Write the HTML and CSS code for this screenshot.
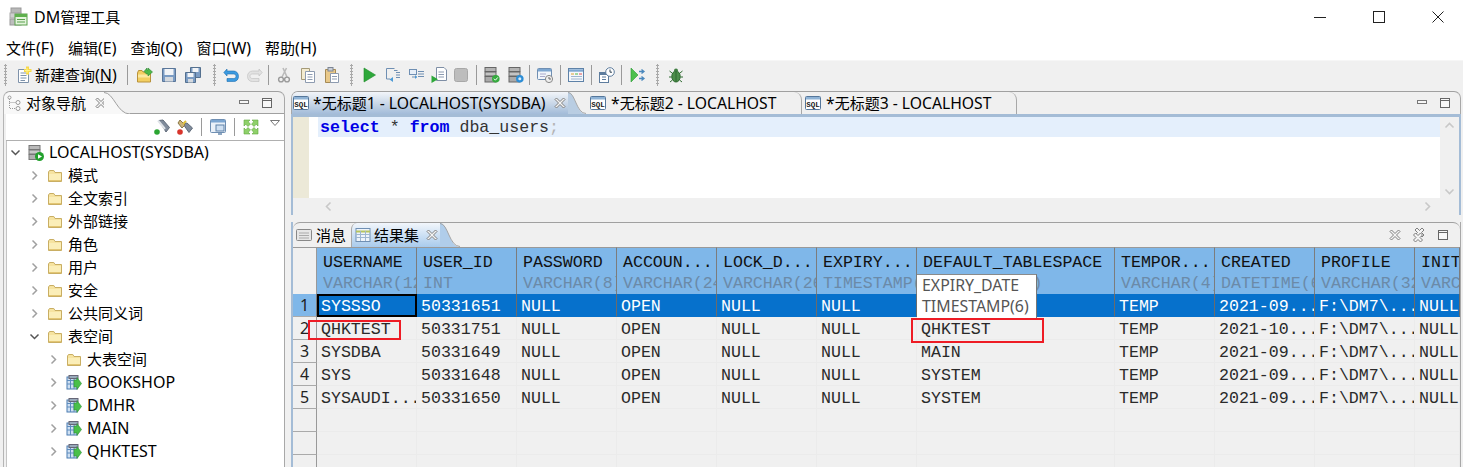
FILE: index.html
```html
<!DOCTYPE html>
<html lang="zh">
<head>
<meta charset="utf-8">
<title>DM管理工具</title>
<link rel="stylesheet" href="styles.css">
</head>
<body>
<svg class="defs" xmlns="http://www.w3.org/2000/svg">
  <symbol id="folder" viewBox="0 0 16 16"><path d="M1.5 4V13.5H14.5V4.5H8L6.8 2.5H2.5Z" fill="#f6e3a0" stroke="#c9ae63"/><path d="M2 6H14V13H2Z" fill="#fbeeb8"/><path d="M2 12.5H14" stroke="#e3c673"/></symbol>
  <symbol id="server" viewBox="0 0 16 16"><rect x="1" y="0.5" width="11" height="4" fill="#b9b9b9" stroke="#777"/><rect x="1" y="5" width="11" height="4" fill="#c8c8c8" stroke="#777"/><rect x="1" y="9.5" width="11" height="5" fill="#b0b0b0" stroke="#777"/><circle cx="11.5" cy="11.5" r="4.5" fill="#22a02c"/><path d="M10 9.2L14 11.5L10 13.8Z" fill="#fff"/></symbol>
  <symbol id="tablespace" viewBox="0 0 16 16"><rect x="1" y="2" width="10" height="12" fill="#cfe0f2" stroke="#4b7cb2"/><path d="M1 5.5H11M1 9H11M4.5 2V14M8 2V14" stroke="#5e8dbf"/><rect x="3" y="0.5" width="9" height="3" fill="#9ab" stroke="#667"/><path d="M8 5H11V2.5L15.5 8.5L11 14.5V12H8Z" fill="#49c04a" stroke="#2f8f37" stroke-width=".6"/></symbol>
  <symbol id="sql" viewBox="0 0 16 16"><rect x="0.5" y="1.5" width="15" height="13" rx="1" fill="#fff" stroke="#55779b"/><rect x="1" y="2" width="14" height="2.5" fill="#8fb3d6"/><text x="8" y="12.2" text-anchor="middle" class="sqltxt">SQL</text></symbol>
  <symbol id="close" viewBox="0 0 12 12"><path d="M2.5 1L6 4.5L9.5 1L11 2.5L7.5 6L11 9.5L9.5 11L6 7.5L2.5 11L1 9.5L4.5 6L1 2.5Z" fill="#f4f4f4" stroke="#7e7e7e"/></symbol>
  <symbol id="closeall" viewBox="0 0 16 16"><path d="M6 1L8.5 3.5L11 1L13 3L10.5 5.5L13 8L11 10L8.5 7.5L6 10L4 8L6.5 5.5L4 3Z" fill="#f4f4f4" stroke="#7e7e7e"/><path d="M4.5 6L7 8.5L9.5 6L11.5 8L9 10.5L11.5 13L9.5 15L7 12.5L4.5 15L2.5 13L5 10.5L2.5 8Z" fill="#f4f4f4" stroke="#7e7e7e"/></symbol>
  <symbol id="minv" viewBox="0 0 12 12"><rect x="1.5" y="3.5" width="9" height="3" fill="#f6f6f6" stroke="#777"/></symbol>
  <symbol id="maxv" viewBox="0 0 12 12"><rect x="1.5" y="1.5" width="9" height="9" fill="#f8f8f8" stroke="#666"/><path d="M1.5 3.5H10.5" stroke="#666"/></symbol>
  <symbol id="grid" viewBox="0 0 16 16"><rect x="1" y="1.5" width="14" height="13" fill="#eef4fb" stroke="#6f8fb3"/><path d="M1 4.5H15" stroke="#b6c45f" stroke-width="2"/><path d="M1 7.5H15M1 10.5H15M5.5 4V14M10.5 4V14" stroke="#9eb6d0"/></symbol>
  <symbol id="msg" viewBox="0 0 16 16"><rect x="0.5" y="2.5" width="15" height="11" rx="1" fill="#e6e6e6" stroke="#888"/><path d="M3 6H13M3 8.5H13M3 11H13" stroke="#aaa"/></symbol>
  <symbol id="newdoc" viewBox="0 0 18 18"><path d="M2.5 3.5H12.5V16.5H2.5Z" fill="#fff" stroke="#7e92aa"/><path d="M4.5 7H10.5M4.5 9.5H10.5M4.5 12H10.5M4.5 14.5H9" stroke="#7e92aa"/><path d="M13 0.5V3H15.5V6H13V8.5H10V6H8V3H10V0.5Z" fill="#f7d84a"/><path d="M11 2V7M9 4.5H14.5" stroke="#fff48e"/></symbol>
  <symbol id="open" viewBox="0 0 16 16"><path d="M0.5 6V15H13.5V5H6L5 3.5H1.5Z" fill="#f3cf62" stroke="#b9923b"/><path d="M1 9H13" stroke="#fbe9a2" stroke-width="3"/><path d="M7 4.5L10 1V3H11V1L15.5 5L11 9V7H9.5Z" fill="#4cb748" stroke="#2c8a34" stroke-width=".6"/></symbol>
  <symbol id="save" viewBox="0 0 16 16"><path d="M1.5 1.5H14.5V14.5H1.5Z" fill="#7b9cc4" stroke="#5a7699"/><rect x="3.5" y="2" width="9" height="6" fill="#f2f4f7"/><rect x="4" y="10" width="8" height="4.5" fill="#d5d9de"/></symbol>
  <symbol id="saveall" viewBox="0 0 16 16"><path d="M5.5 .5H15.5V10.5H5.5Z" fill="#7b9cc4" stroke="#54708f"/><rect x="7.5" y="1" width="6" height="4" fill="#f2f4f7"/><path d="M.5 5.5H10.5V15.5H.5Z" fill="#7b9cc4" stroke="#54708f"/><rect x="2.5" y="6" width="6" height="4" fill="#f2f4f7"/><rect x="3" y="12" width="5" height="3.5" fill="#d5d9de"/></symbol>
  <symbol id="undo" viewBox="0 0 16 16"><path d="M4 2L0.8 5.5L4 9V7H10.5C12.2 7 13 8 13 9.3C13 10.7 12 11.5 10.5 11.5H4V14.5H10.8C13.6 14.5 15.5 12.3 15.5 9.4C15.5 6.3 13.5 4 10.6 4H4Z" fill="#3b9ae0" stroke="#1f6fb0" stroke-width=".6"/></symbol>
  <symbol id="redo" viewBox="0 0 16 16"><path d="M12 2L15.2 5.5L12 9V7H5.5C3.8 7 3 8 3 9.3C3 10.7 4 11.5 5.5 11.5H12V14.5H5.2C2.4 14.5 .5 12.3 .5 9.4C.5 6.3 2.5 4 5.4 4H12Z" fill="#e2e2e2" stroke="#bdbdbd" stroke-width=".6"/></symbol>
  <symbol id="cut" viewBox="0 0 16 16"><path d="M10.5 1L6 10M7 1L11 10" stroke="#bbb" stroke-width="1.6" fill="none"/><circle cx="5" cy="12.5" r="2.4" fill="none" stroke="#9a9a9a" stroke-width="1.4"/><circle cx="11" cy="12.5" r="2.4" fill="none" stroke="#9a9a9a" stroke-width="1.4"/></symbol>
  <symbol id="copy" viewBox="0 0 16 16"><path d="M1.5 1.5H9.5V12.5H1.5Z" fill="#f4ecd0" stroke="#a59a78"/><path d="M5.5 4.5H14.5V15.5H5.5Z" fill="#fff" stroke="#8d9bb0"/><path d="M7.5 7.5H12.5M7.5 10H12.5M7.5 12.5H12.5" stroke="#8d9bb0"/></symbol>
  <symbol id="paste" viewBox="0 0 16 16"><path d="M1.5 2.5H11.5V15.5H1.5Z" fill="#e9c98a" stroke="#a58a55"/><rect x="4" y=".5" width="5" height="3.5" fill="#c9ced6" stroke="#7c8594"/><path d="M6.5 6.5H14.5V15.5H6.5Z" fill="#fff" stroke="#8d9bb0"/><path d="M8 9.5H13M8 12H13" stroke="#8d9bb0"/></symbol>
  <symbol id="play" viewBox="0 0 16 16"><path d="M3 1L14.5 8L3 15Z" fill="#2ea83a" stroke="#1e8a2a" stroke-width=".6"/></symbol>
  <symbol id="runa" viewBox="0 0 16 16"><path d="M1.5 1.5H9.5M1.5 1.5V12H5M12.5 3.5H9M11 5.5H15M11 8H15M11 10.5H15" stroke="#6f8fb3" fill="none"/><path d="M8 10V15L4.5 12.5Z" fill="#4c9ad6"/></symbol>
  <symbol id="runb" viewBox="0 0 16 16"><rect x=".5" y="2.5" width="7" height="5" fill="#e7eff8" stroke="#6f8fb3"/><path d="M9 4.5H15M9 7H15M9 9.5H15M3 10H8" stroke="#6f8fb3"/><path d="M6 8L8 10L6 12Z" fill="#4c9ad6"/></symbol>
  <symbol id="rund" viewBox="0 0 16 16"><path d="M5.5 .5H13L15.5 3V13.5H5.5Z" fill="#fff" stroke="#7e8ea5"/><path d="M7.5 5H13M7.5 7.5H13M7.5 10H13" stroke="#8d9bb0"/><path d="M.5 8.5L7 12.2L.5 16Z" fill="#2ea83a"/></symbol>
  <symbol id="stop" viewBox="0 0 16 16"><rect x="1.5" y="1.5" width="13" height="13" rx="2" fill="#bdbdbd" stroke="#a8a8a8"/></symbol>
  <symbol id="dbok" viewBox="0 0 16 16"><rect x="1" y=".5" width="11" height="4" fill="#b3b3b3" stroke="#666"/><rect x="1" y="5" width="11" height="4" fill="#c4c4c4" stroke="#666"/><rect x="1" y="9.5" width="11" height="5.5" fill="#aaa" stroke="#666"/><circle cx="11.8" cy="11.8" r="3.8" fill="#35ab3e"/><path d="M10 11.7L11.4 13.2L13.8 10.4" stroke="#fff" fill="none"/></symbol>
  <symbol id="dbblue" viewBox="0 0 16 16"><rect x="1" y=".5" width="11" height="4" fill="#b3b3b3" stroke="#666"/><rect x="1" y="5" width="11" height="4" fill="#c4c4c4" stroke="#666"/><rect x="1" y="9.5" width="11" height="5.5" fill="#aaa" stroke="#666"/><circle cx="11.8" cy="11.8" r="3.8" fill="#2d8ed6"/><circle cx="11.8" cy="11.8" r="1.5" fill="#d8ecfa"/></symbol>
  <symbol id="winclock" viewBox="0 0 16 16"><rect x=".5" y="1.5" width="14" height="11" rx="1" fill="#f0f5fb" stroke="#6f8fb3"/><rect x="1" y="2" width="13" height="2.5" fill="#7ca6d1"/><path d="M3 7H9M3 9.5H8" stroke="#aac"/><circle cx="12" cy="12" r="3.6" fill="#eee" stroke="#888"/><path d="M12 10V12H14" stroke="#666" fill="none"/></symbol>
  <symbol id="tablebig" viewBox="0 0 16 16"><rect x=".5" y="1.5" width="15" height="13" fill="#f4f7fb" stroke="#5e82a8"/><path d="M1 3.5H15" stroke="#7ca6d1" stroke-width="2.4"/><path d="M3 7H6" stroke="#e0a030"/><path d="M7 7H10" stroke="#4cb748"/><path d="M11 7H14" stroke="#e05050"/><path d="M3 9.5H14M3 12H14" stroke="#9eb6d0"/></symbol>
  <symbol id="calclock" viewBox="0 0 16 16"><rect x=".5" y="5.5" width="9" height="10" fill="#fff" stroke="#5e7d9e"/><rect x="1" y="6" width="8" height="2" fill="#5e7d9e"/><path d="M3 10H7M3 12.5H7" stroke="#5e7d9e"/><circle cx="11" cy="5" r="4.3" fill="#fff" stroke="#5e7d9e"/><path d="M11 2.5V5.2H13" stroke="#345" fill="none"/></symbol>
  <symbol id="runstep" viewBox="0 0 16 16"><path d="M1 1L8 8L1 15Z" fill="#4bc04e" stroke="#2a9b34" stroke-width=".6"/><path d="M9 4.5H13M11.5 2.5L14 4.5L11.5 6.5M9 11.5H13M11.5 9.5L14 11.5L11.5 13.5" stroke="#4b88bd" fill="none" stroke-width="1.3"/></symbol>
  <symbol id="bug" viewBox="0 0 16 16"><ellipse cx="8" cy="9.5" rx="4.2" ry="5.5" fill="#4c8d4a" stroke="#2f6b30"/><circle cx="8" cy="3.4" r="2" fill="#3f7d40"/><path d="M8 4V15M4 6L1.5 4M12 6L14.5 4M3.8 10H1M12.2 10H15M4.5 13L2 15M11.5 13L14 15" stroke="#2f6b30"/></symbol>
  <symbol id="plugg" viewBox="0 0 16 16"><path d="M5 1.5L9 1L15.5 8.5L12 13Z" fill="#7f8b9b" stroke="#5f6a79"/><path d="M4 1.5L11 10" stroke="#dfe3e8" stroke-width="2"/><circle cx="3" cy="13" r="2.8" fill="#2ba532"/></symbol>
  <symbol id="plugr" viewBox="0 0 16 16"><path d="M6 5L10 4L15.5 9L12 13.5Z" fill="#7f8b9b" stroke="#5f6a79"/><path d="M3 1L8 6L5 9L1 4Z" fill="#cbb37a" stroke="#8a7748"/><path d="M6 5L9 2" stroke="#e0c23c" stroke-width="2"/><circle cx="3" cy="13" r="2.8" fill="#d8352c"/></symbol>
  <symbol id="wincomp" viewBox="0 0 16 16"><rect x=".5" y=".5" width="15" height="13" rx="1" fill="#eaf1f9" stroke="#6f8fb3"/><rect x="1" y="1" width="14" height="2.5" fill="#7ca6d1"/><rect x="6" y="6" width="8" height="6" fill="#cfe0f2" stroke="#5e82a8"/><path d="M8 15H12" stroke="#5e82a8" stroke-width="1.4"/></symbol>
  <symbol id="expand" viewBox="0 0 16 16"><path d="M1 1H7L5.2 2.8L7.5 5L5 7.5L2.8 5.2L1 7ZM15 1V7L13.2 5.2L11 7.5L8.5 5L10.8 2.8L9 1ZM1 15V9L2.8 10.8L5 8.5L7.5 11L5.2 13.2L7 15ZM15 15H9L10.8 13.2L8.5 11L11 8.5L13.2 10.8L15 9Z" fill="#8fd16a" stroke="#5fa83e" stroke-width=".6"/></symbol>
  <symbol id="tree" viewBox="0 0 16 16"><path d="M2.5 2V13.5H9M2.5 7.5H9" stroke="#999" stroke-dasharray="1 1" fill="none"/><circle cx="2.5" cy="2.5" r="1.5" fill="#fff" stroke="#999"/><circle cx="11" cy="7.5" r="2" fill="#fff" stroke="#999"/><circle cx="11" cy="13.5" r="2" fill="#fff" stroke="#999"/></symbol>
  <symbol id="appicon" viewBox="0 0 20 20"><rect x="3" y="1" width="10" height="5" fill="#b8b8b8" stroke="#999"/><rect x="2" y="6" width="11" height="5" fill="#cfcfcf" stroke="#aaa"/><rect x="2" y="12" width="11" height="6" fill="#bdbdbd" stroke="#999"/><rect x="7" y="7" width="12" height="11" fill="#e3f4dc" stroke="#5aa04c"/><rect x="7" y="7" width="12" height="3" fill="#5fb04d"/><path d="M9 12.5H17M9 15H17" stroke="#5aa04c"/></symbol>
  <symbol id="chevr" viewBox="0 0 11 11"><path d="M3.5 1.5L7.5 5.5L3.5 9.5" fill="none" stroke="#a0a0a0" stroke-width="1.5"/></symbol>
  <symbol id="chevd" viewBox="0 0 11 11"><path d="M1.5 3.5L5.5 7.5L9.5 3.5" fill="none" stroke="#555" stroke-width="1.5"/></symbol>
</svg>

<header class="titlebar">
  <svg class="app-icon"><use href="#appicon"/></svg>
  <span class="app-title"><em class="lat">DM</em>管理工具</span>
  <div class="winctl">
    <svg class="wc" viewBox="0 0 12 12"><path d="M0 6.5H12" stroke="#222"/></svg>
    <svg class="wc" viewBox="0 0 12 12"><rect x=".5" y=".5" width="11" height="11" fill="none" stroke="#222"/></svg>
    <svg class="wc" viewBox="0 0 12 12"><path d="M.5 .5L11.5 11.5M11.5 .5L.5 11.5" stroke="#222"/></svg>
  </div>
</header>

<nav class="menubar">
  <span>文件<em class="lat">(F)</em></span><span>编辑<em class="lat">(E)</em></span><span>查询<em class="lat">(Q)</em></span><span>窗口<em class="lat">(W)</em></span><span>帮助<em class="lat">(H)</em></span>
</nav>

<div class="toolbar">
  <i class="grip"></i>
  <div class="newq"><svg class="ic18"><use href="#newdoc"/></svg><span>新建查询<em class="lat">(<u>N</u>)</em></span></div>
  <i class="sep sep-a"></i>
  <b class="tb"><svg><use href="#open"/></svg></b>
  <b class="tb"><svg><use href="#save"/></svg></b>
  <b class="tb"><svg><use href="#saveall"/></svg></b>
  <i class="grip grip-m"></i>
  <b class="tb"><svg><use href="#undo"/></svg></b>
  <b class="tb"><svg><use href="#redo"/></svg></b>
  <i class="sep sep-r"></i>
  <b class="tb"><svg><use href="#cut"/></svg></b>
  <b class="tb"><svg><use href="#copy"/></svg></b>
  <b class="tb"><svg><use href="#paste"/></svg></b>
  <i class="grip grip-n"></i>
  <b class="tb"><svg><use href="#play"/></svg></b>
  <b class="tb"><svg><use href="#runa"/></svg></b>
  <b class="tb"><svg><use href="#runb"/></svg></b>
  <b class="tb tb-n"><svg><use href="#rund"/></svg></b>
  <b class="tb"><svg><use href="#stop"/></svg></b>
  <i class="sep"></i>
  <b class="tb"><svg><use href="#dbok"/></svg></b>
  <b class="tb"><svg><use href="#dbblue"/></svg></b>
  <i class="sep sep-r"></i>
  <b class="tb"><svg><use href="#winclock"/></svg></b>
  <i class="sep"></i>
  <b class="tb"><svg><use href="#tablebig"/></svg></b>
  <i class="sep"></i>
  <b class="tb"><svg><use href="#calclock"/></svg></b>
  <i class="sep sep-s"></i>
  <b class="tb"><svg><use href="#runstep"/></svg></b>
  <i class="grip grip-b"></i>
  <b class="tb"><svg><use href="#bug"/></svg></b>
</div>

<main class="workspace">
  <section class="nav-panel">
    <div class="tabrow">
      <div class="tab nav-tab">
        <svg class="ic16"><use href="#tree"/></svg>
        <span>对象导航</span>
        <svg class="x12"><use href="#close"/></svg>
      </div>
      <svg class="curve" viewBox="0 0 26 23" preserveAspectRatio="none"><path d="M0 0C10 0 13 22 26 22V23H0Z" fill="#f8f8f8"/><path d="M0 .5C10 .5 13 22 26 22" fill="none" stroke="#a0a0a0"/></svg>
      <div class="tabfill">
        <svg class="x12"><use href="#minv"/></svg>
        <svg class="x12"><use href="#maxv"/></svg>
      </div>
    </div>
    <div class="nav-tools">
      <svg class="ic16"><use href="#plugg"/></svg>
      <svg class="ic16"><use href="#plugr"/></svg>
      <i class="sep"></i>
      <svg class="ic16"><use href="#wincomp"/></svg>
      <i class="sep"></i>
      <svg class="ic16"><use href="#expand"/></svg>
      <svg class="tri" viewBox="0 0 10 6"><path d="M.5 .5H9.5L5 5.5Z" fill="#fff" stroke="#777"/></svg>
    </div>
    <ul class="tree">
      <li class="lv0"><svg class="chev"><use href="#chevd"/></svg><svg class="ic16"><use href="#server"/></svg><span class="lat">LOCALHOST(SYSDBA)</span></li>
      <li class="lv1"><svg class="chev"><use href="#chevr"/></svg><svg class="ic16"><use href="#folder"/></svg><span>模式</span></li>
      <li class="lv1"><svg class="chev"><use href="#chevr"/></svg><svg class="ic16"><use href="#folder"/></svg><span>全文索引</span></li>
      <li class="lv1"><svg class="chev"><use href="#chevr"/></svg><svg class="ic16"><use href="#folder"/></svg><span>外部链接</span></li>
      <li class="lv1"><svg class="chev"><use href="#chevr"/></svg><svg class="ic16"><use href="#folder"/></svg><span>角色</span></li>
      <li class="lv1"><svg class="chev"><use href="#chevr"/></svg><svg class="ic16"><use href="#folder"/></svg><span>用户</span></li>
      <li class="lv1"><svg class="chev"><use href="#chevr"/></svg><svg class="ic16"><use href="#folder"/></svg><span>安全</span></li>
      <li class="lv1"><svg class="chev"><use href="#chevr"/></svg><svg class="ic16"><use href="#folder"/></svg><span>公共同义词</span></li>
      <li class="lv1"><svg class="chev"><use href="#chevd"/></svg><svg class="ic16"><use href="#folder"/></svg><span>表空间</span></li>
      <li class="lv2"><svg class="chev"><use href="#chevr"/></svg><svg class="ic16"><use href="#folder"/></svg><span>大表空间</span></li>
      <li class="lv2"><svg class="chev"><use href="#chevr"/></svg><svg class="ic16"><use href="#tablespace"/></svg><span class="lat">BOOKSHOP</span></li>
      <li class="lv2"><svg class="chev"><use href="#chevr"/></svg><svg class="ic16"><use href="#tablespace"/></svg><span class="lat">DMHR</span></li>
      <li class="lv2"><svg class="chev"><use href="#chevr"/></svg><svg class="ic16"><use href="#tablespace"/></svg><span class="lat">MAIN</span></li>
      <li class="lv2"><svg class="chev"><use href="#chevr"/></svg><svg class="ic16"><use href="#tablespace"/></svg><span class="lat">QHKTEST</span></li>
    </ul>
  </section>

  <section class="right-panel">
    <div class="edit-tabs">
      <div class="tab etab-active">
        <svg class="ic16"><use href="#sql"/></svg>
        <span><em class="lat">*</em>无标题<em class="lat">1 - LOCALHOST(SYSDBA)</em></span>
        <svg class="x12"><use href="#close"/></svg>
      </div>
      <svg class="curve curve-blue" viewBox="0 0 22 23" preserveAspectRatio="none"><path d="M0 0C9 0 10 23 22 23H0Z" fill="#b9cde2"/><path d="M0 .5C9 .5 10 22.5 22 22.5" fill="none" stroke="#a0a0a0"/></svg>
      <div class="tab etab etab2">
        <svg class="ic16"><use href="#sql"/></svg>
        <span><em class="lat">*</em>无标题<em class="lat">2 - LOCALHOST</em></span>
      </div>
      <div class="tab etab etab3">
        <svg class="ic16"><use href="#sql"/></svg>
        <span><em class="lat">*</em>无标题<em class="lat">3 - LOCALHOST</em></span>
      </div>
      <div class="tabfill tabfill-edit">
        <svg class="x12"><use href="#minv"/></svg>
        <svg class="x12"><use href="#maxv"/></svg>
      </div>
    </div>
    <div class="editor">
      <div class="gutter"></div>
      <div class="code-area">
        <div class="code-line"><b class="kw">select</b> * <b class="kw">from</b> dba_users<span class="semi">;</span></div>
      </div>
      <div class="vscroll"><svg class="arrow" viewBox="0 0 11 11"><path d="M1.5 7.5L5.5 3.5L9.5 7.5" fill="none" stroke="#c8c8c8" stroke-width="1.6"/></svg><svg class="arrow" viewBox="0 0 11 11"><path d="M1.5 3.5L5.5 7.5L9.5 3.5" fill="none" stroke="#c8c8c8" stroke-width="1.6"/></svg></div>
    </div>
    <div class="hscroll"><svg class="arrow" viewBox="0 0 11 11"><path d="M7.5 1.5L3.5 5.5L7.5 9.5" fill="none" stroke="#c8c8c8" stroke-width="1.6"/></svg><svg class="arrow" viewBox="0 0 11 11"><path d="M3.5 1.5L7.5 5.5L3.5 9.5" fill="none" stroke="#c8c8c8" stroke-width="1.6"/></svg></div>

    <div class="result">
      <div class="res-tabs">
        <div class="tab rtab"><svg class="ic16"><use href="#msg"/></svg><span>消息</span></div>
        <div class="tab rtab-active"><svg class="ic16"><use href="#grid"/></svg><span>结果集</span><svg class="x12"><use href="#close"/></svg></div>
        <svg class="curve curve-res" viewBox="0 0 22 25" preserveAspectRatio="none"><path d="M0 0C9 0 10 25 22 25H0Z" fill="#b0cdea"/><path d="M0 .5C9 .5 10 24.5 22 24.5" fill="none" stroke="#a0a0a0"/></svg>
        <div class="tabfill tabfill-res">
          <svg class="x12"><use href="#close"/></svg>
          <svg class="ic16"><use href="#closeall"/></svg>
          <svg class="x12"><use href="#maxv"/></svg>
        </div>
      </div>
      <div class="grid-wrap">
        <table class="grid">
          <colgroup><col class="c-n"><col class="c"><col class="c"><col class="c"><col class="c"><col class="c"><col class="c"><col class="c-w"><col class="c"><col class="c"><col class="c"><col class="c-e"></colgroup>
          <thead>
            <tr>
              <th class="corner"></th>
              <th><div class="hn">USERNAME</div><div class="ht">VARCHAR(128)</div></th>
              <th><div class="hn">USER_ID</div><div class="ht">INT</div></th>
              <th><div class="hn">PASSWORD</div><div class="ht">VARCHAR(8)</div></th>
              <th><div class="hn">ACCOUN...</div><div class="ht">VARCHAR(24)</div></th>
              <th><div class="hn">LOCK_D...</div><div class="ht">VARCHAR(26)</div></th>
              <th><div class="hn">EXPIRY...</div><div class="ht">TIMESTAMP(6)</div></th>
              <th><div class="hn">DEFAULT_TABLESPACE</div><div class="ht">VARCHAR(128)</div></th>
              <th><div class="hn">TEMPOR...</div><div class="ht">VARCHAR(4)</div></th>
              <th><div class="hn">CREATED</div><div class="ht">DATETIME(6)</div></th>
              <th><div class="hn">PROFILE</div><div class="ht">VARCHAR(32)</div></th>
              <th><div class="hn">INITIAL</div><div class="ht">VARCHAR(32)</div></th>
            </tr>
          </thead>
          <tbody>
            <tr class="sel"><th>1</th><td class="cur">SYSSSO</td><td>50331651</td><td>NULL</td><td>OPEN</td><td>NULL</td><td>NULL</td><td></td><td>TEMP</td><td>2021-09...</td><td>F:\DM7\...</td><td>NULL</td></tr>
            <tr><th>2</th><td>QHKTEST</td><td>50331751</td><td>NULL</td><td>OPEN</td><td>NULL</td><td>NULL</td><td>QHKTEST</td><td>TEMP</td><td>2021-10...</td><td>F:\DM7\...</td><td>NULL</td></tr>
            <tr><th>3</th><td>SYSDBA</td><td>50331649</td><td>NULL</td><td>OPEN</td><td>NULL</td><td>NULL</td><td>MAIN</td><td>TEMP</td><td>2021-09...</td><td>F:\DM7\...</td><td>NULL</td></tr>
            <tr><th>4</th><td>SYS</td><td>50331648</td><td>NULL</td><td>OPEN</td><td>NULL</td><td>NULL</td><td>SYSTEM</td><td>TEMP</td><td>2021-09...</td><td>F:\DM7\...</td><td>NULL</td></tr>
            <tr><th>5</th><td>SYSAUDI...</td><td>50331650</td><td>NULL</td><td>OPEN</td><td>NULL</td><td>NULL</td><td>SYSTEM</td><td>TEMP</td><td>2021-09...</td><td>F:\DM7\...</td><td>NULL</td></tr>
            <tr><th></th><td></td><td></td><td></td><td></td><td></td><td></td><td></td><td></td><td></td><td></td><td></td></tr>
            <tr><th></th><td></td><td></td><td></td><td></td><td></td><td></td><td></td><td></td><td></td><td></td><td></td></tr>
            <tr><th></th><td></td><td></td><td></td><td></td><td></td><td></td><td></td><td></td><td></td><td></td><td></td></tr>
          </tbody>
        </table>
        <div class="tooltip">EXPIRY_DATE<br>TIMESTAMP(6)</div>
        <div class="mark mark-a"></div>
        <div class="mark mark-b"></div>
      </div>
    </div>
  </section>
</main>
</body>
</html>
```

FILE: styles.css
```css
* { box-sizing: border-box; }
html, body { margin: 0; padding: 0; }
body {
  width: 1463px;
  height: 467px;
  overflow: hidden;
  background: #fff;
  color: #000;
  font-family: "Noto Sans", "Noto Sans CJK SC", sans-serif;
  font-size: 15px;
  display: flex;
  flex-direction: column;
}
.defs { display: none; }
.lat { font-size: 16px; font-style: normal; }
.tab .lat { font-size: 15.7px; }
.sqltxt { font: bold 7.5px "Liberation Mono", monospace; fill: #1a1a1a; }
svg { flex: none; display: block; }
.ic16 { width: 16px; height: 16px; }
.ic18 { width: 18px; height: 18px; }
.x12 { width: 12px; height: 12px; }

/* title bar */
.titlebar { height: 38px; flex: none; display: flex; align-items: center; padding: 0 0 5px 8px; }
.app-icon { width: 20px; height: 20px; margin-right: 6px; }
.winctl { margin-left: auto; display: flex; align-items: center; padding-right: 19px; gap: 47px; margin-top: 1px; }
.wc { width: 12px; height: 12px; }

/* menu */
.menubar { height: 22px; flex: none; display: flex; align-items: center; padding: 0 0 3px 6px; gap: 14px; }

/* toolbar */
.toolbar { height: 31px; flex: none; background: #f0f0f0; border-top: 1px solid #f6f6f6; display: flex; align-items: center; padding: 0 0 2px 4px; }
.grip { width: 3px; height: 22px; flex: none; background-image: radial-gradient(circle, #a9a9a9 1px, transparent 1.2px); background-size: 3px 3px; }
.grip-m { margin: 0 3px 0 8px; }
.grip-n { margin: 0 4px 0 6px; }
.grip-b { margin: 0 5px 0 6px; }
.sep { width: 1px; height: 20px; flex: none; background: #9a9a9a; margin: 0 3px; }
.sep-a { margin: 0 5px 0 6px; }
.sep-r { margin: 0 3px 0 1px; }
.sep-s { margin: 0 4px 0 2px; }
.newq { display: flex; align-items: center; margin-left: 6px; gap: 1px; width: 108px; padding-left: 3px; white-space: nowrap; }
.newq span { padding-bottom: 1px; }
.tb { width: 24px; height: 24px; flex: none; display: flex; align-items: center; justify-content: center; font-weight: normal; }
.tb svg { width: 16px; height: 16px; }
.tb-n { width: 20px; }

/* workspace */
.workspace { flex: 1; min-height: 0; background: #f0f0f0; display: flex; padding: 0 2px 0 3px; gap: 6px; }
.nav-panel { width: 282px; flex: none; display: flex; flex-direction: column; border-left: 1px solid #b5b5b5; border-right: 1px solid #a8a8a8; border-top: 1px solid #a0a0a0; border-top-left-radius: 7px; border-top-right-radius: 7px; padding-left: 1px; background: #f0f0f0; }
.tab { display: flex; align-items: center; white-space: nowrap; }
.tab span { padding-bottom: 1px; }
.tabrow { height: 22px; flex: none; display: flex; }
.nav-tab { width: 100px; background: #f8f8f8; padding-left: 3px; gap: 3px; margin-left: -1px; border-top-left-radius: 7px; }
.nav-tab .x12 { margin-left: 6px; }
.curve { width: 26px; height: 23px; flex: none; }
.tabfill { flex: 1; border-bottom: 1px solid #a0a0a0; display: flex; justify-content: flex-end; align-items: center; gap: 11px; padding-right: 11px; }
.nav-tools { height: 27px; flex: none; display: flex; align-items: center; justify-content: flex-end; background: #fff; gap: 7px; padding-right: 4px; margin-left: 1px; border-bottom: 1px solid #b0b0b0; }
.nav-tools .sep { height: 18px; margin: 0 1px; }
.tri { width: 10px; height: 6px; margin: -8px 0 0 4px; }

.tree { list-style: none; margin: 0 0 0 1px; padding: 0; flex: 1; min-height: 0; background: #fff; overflow: hidden; border-left: 1px solid #c4c4c4; }
.tree li { height: 23px; display: flex; align-items: center; white-space: nowrap; }
.tree span { padding-bottom: 2px; }
.chev { width: 11px; height: 11px; margin-right: 7px; }
.tree .ic16 { margin-right: 5px; }
.lv0 { padding-left: 3px; }
.lv1 { padding-left: 22px; }
.lv2 { padding-left: 41px; }

/* right */
.right-panel { flex: 1; min-width: 0; display: flex; flex-direction: column; }
.edit-tabs { height: 23px; flex: none; display: flex; border-top: 1px solid #a0a0a0; border-top-left-radius: 7px; border-top-right-radius: 7px; border-left: 1px solid #a8a8a8; border-right: 1px solid #a8a8a8; }
.etab-active { width: 276px; background: linear-gradient(#f2f5f9, #a3bcd9); padding-left: 1px; gap: 4px; border-top-left-radius: 6px; }
.etab-active .x12 { margin-left: 4px; }
.curve-blue { width: 18px; height: 22px; margin-right: 2px; }
.etab { gap: 5px; padding-left: 2px; border-right: 1px solid #a8a8a8; border-top-right-radius: 8px; }
.etab2 { width: 214px; }
.etab3 { width: 215px; padding-left: 3px; }
.tabfill-edit { border-bottom: 0; padding-right: 9px; }
.editor { height: 84px; flex: none; display: flex; border-top: 3px solid #a4bcd6; border-left: 2px solid #a4bcd6; border-right: 2px solid #a4bcd6; background: #f0f0f0; }
.gutter { width: 16px; flex: none; background: #ece9d8; }
.code-area { flex: 1; min-width: 0; background: #fff; padding-left: 9px; }
.code-line { height: 20px; background: #e4effc; font: 16.6px/21px "Liberation Mono", monospace; color: #333; white-space: pre; padding-left: 2px; }
.kw { color: #0000e6; font-weight: bold; }
.semi { color: #b5b5b5; }
.vscroll { width: 19px; flex: none; display: flex; flex-direction: column; justify-content: space-between; align-items: center; padding: 3px 0 1px; }
.arrow { width: 11px; height: 11px; }
.hscroll { height: 17px; flex: none; display: flex; justify-content: space-between; align-items: center; padding: 0 26px 0 30px; border-left: 2px solid #a4bcd6; border-right: 2px solid #a4bcd6; }
.result { flex: 1; min-height: 0; margin-top: 7px; display: flex; flex-direction: column; border-left: 2px solid #a4bcd6; border-right: 1px solid #a8a8a8; position: relative; }
.res-tabs { height: 25px; flex: none; display: flex; border-top: 1px solid #a0a0a0; border-top-left-radius: 7px; border-top-right-radius: 7px; }
.rtab { width: 58px; padding-left: 3px; gap: 4px; }
.rtab-active { width: 89px; background: linear-gradient(#f2f6fb, #a9cbec); padding-left: 3px; gap: 3px; border-top-left-radius: 6px; border-left: 1px solid #a8a8a8; }
.rtab-active .x12 { margin-left: 4px; }
.curve-res { width: 20px; height: 24px; }
.tabfill-res { border-bottom: 0; gap: 10px; padding-right: 11px; }
.grid-wrap { flex: 1; min-height: 0; overflow: hidden; position: relative; }

/* table */
.grid { border-collapse: separate; border-spacing: 0; table-layout: fixed; width: 1167px; font: 16.6px "Liberation Mono", monospace; color: #2a2a2a; }
.c-n { width: 24px; }
.c { width: 100px; }
.c-w { width: 198px; }
.c-e { width: 45px; }
.grid thead th { height: 47px; background: #7fb7e9; border-top: 1px solid #9a9a9a; border-right: 1px solid #7c7c7c; text-align: left; font-weight: normal; padding: 0 0 0 6px; overflow: hidden; white-space: nowrap; vertical-align: top; }
.grid thead th.corner { background: #f0f0f0; border-right: 1px solid #999; }
.hn { line-height: 21px; padding-top: 4px; height: 25px; color: #111; }
.ht { line-height: 21px; color: #6b8aa8; overflow: hidden; }
.grid tbody th { height: 23px; background: #f0f0f0; border-right: 1px solid #999; border-bottom: 1px solid #aaa; font: normal 16px "Noto Sans", sans-serif; text-align: center; padding: 0; color: #222; }
.grid td { height: 23px; padding: 2px 0 0 4px; border-right: 1px solid #ebebeb; border-bottom: 1px solid #ebebeb; overflow: hidden; white-space: nowrap; }
.sel td { background: #0671cc; color: #fff; border-right-color: #6b6b6b; border-bottom-color: #0671cc; }
.sel th { background: #7fb7e9 !important; border-right-color: #7c7c7c !important; }
.sel td.cur { outline: 2px solid #000; outline-offset: -2px; }

/* overlays */
.tooltip { position: absolute; left: 624px; top: 27px; width: 120px; height: 44px; background: #fff; border-top: 1px solid #8a8a8a; border-right: 1px solid #777; color: #555; padding: 0 0 0 5px; line-height: 21px; font-size: 15.9px; white-space: nowrap; }
.mark { position: absolute; border: 2px solid #ee1c25; }
.mark-a { left: 15px; top: 73px; width: 93px; height: 20px; }
.mark-b { left: 618px; top: 71px; width: 133px; height: 25px; }
```
